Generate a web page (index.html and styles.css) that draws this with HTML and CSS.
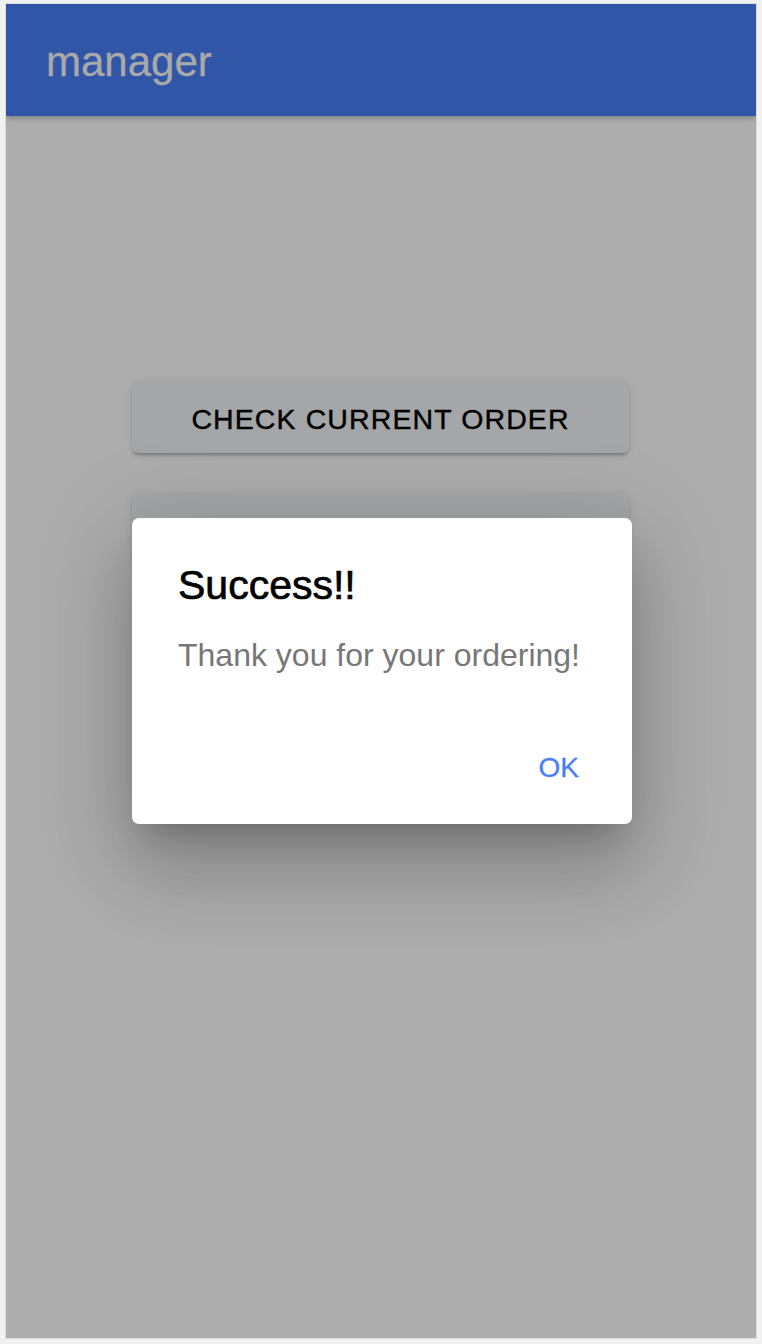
FILE: index.html
```html
<!DOCTYPE html>
<html>
<head>
<meta charset="utf-8">
<link rel="stylesheet" href="styles.css">
</head>
<body>
<div class="device">
  <header class="appbar"><span class="appbar-title">manager</span></header>
  <main class="content">
    <button class="action-btn">CHECK CURRENT ORDER</button>
    <button class="action-btn">PLACE NEW ORDER</button>
  </main>
  <div class="dialog" role="dialog">
    <h2 class="dialog-title">Success!!</h2>
    <p class="dialog-text">Thank you for your ordering!</p>
    <div class="dialog-actions"><button class="dialog-ok">OK</button></div>
  </div>
</div>
</body>
</html>
```
FILE: styles.css
```css
html, body {
  margin: 0;
  padding: 0;
}
body {
  background: #f1f1f1;
  width: 762px;
  height: 1344px;
  padding: 4px 6px 0 6px;
  box-sizing: border-box;
  font-family: "Liberation Sans", Arial, sans-serif;
}
.device {
  position: relative;
  width: 750px;
  height: 1334px;
  background: #adadad;
  outline: 1px solid #dcdcdc;
  overflow: hidden;
  display: flex;
  flex-direction: column;
}
.appbar {
  height: 112px;
  box-sizing: border-box;
  background: #3256a7;
  padding: 34px 0 0 40px;
  box-shadow: 0 2px 5px rgba(0,0,0,0.28);
  position: relative;
  z-index: 1;
}
.appbar-title {
  display: block;
  font-size: 42px;
  line-height: 48px;
  color: #a9a9aa;
  -webkit-text-stroke: 0.3px #a9a9aa;
}
.content {
  flex: 1;
  display: flex;
  flex-direction: column;
  align-items: flex-start;
  padding: 266px 0 0 126px;
  gap: 40px;
}
.action-btn {
  width: 497px;
  height: 71px;
  border: 0;
  border-radius: 6px;
  background: #a5a6a8;
  box-shadow: 0 3px 3px -1px rgba(0,0,0,0.25), 0 1px 8px 0 rgba(0,0,0,0.10);
  font-family: "Liberation Sans", Arial, sans-serif;
  font-size: 28.5px;
  letter-spacing: 1.1px;
  line-height: 36px;
  color: #000;
  -webkit-text-stroke: 0.4px #000;
  padding: 3px 0 0 0;
  display: flex;
  align-items: center;
  justify-content: center;
}
.dialog {
  position: absolute;
  left: 126px;
  top: 514px;
  width: 500px;
  height: 306px;
  box-sizing: border-box;
  background: #fff;
  border-radius: 7px;
  padding: 43px 0 0 46px;
  box-shadow: 0 22px 30px -14px rgba(0,0,0,0.2), 0 48px 76px 6px rgba(0,0,0,0.14), 0 18px 92px 16px rgba(0,0,0,0.12);
}
.dialog-title {
  margin: 0;
  font-size: 41px;
  line-height: 48px;
  font-weight: normal;
  color: #000;
  -webkit-text-stroke: 0.7px #000;
}
.dialog-text {
  margin: 26px 0 0 0;
  font-size: 32px;
  line-height: 40px;
  color: #777;
  white-space: nowrap;
}
.dialog-actions {
  margin-top: 75px;
  padding-right: 53px;
  display: flex;
  justify-content: flex-end;
}
.dialog-ok {
  border: 0;
  background: none;
  padding: 0;
  font-family: "Liberation Sans", Arial, sans-serif;
  font-size: 28px;
  line-height: 36px;
  color: #4a7ff4;
  -webkit-text-stroke: 0.3px #4a7ff4;
}
```
